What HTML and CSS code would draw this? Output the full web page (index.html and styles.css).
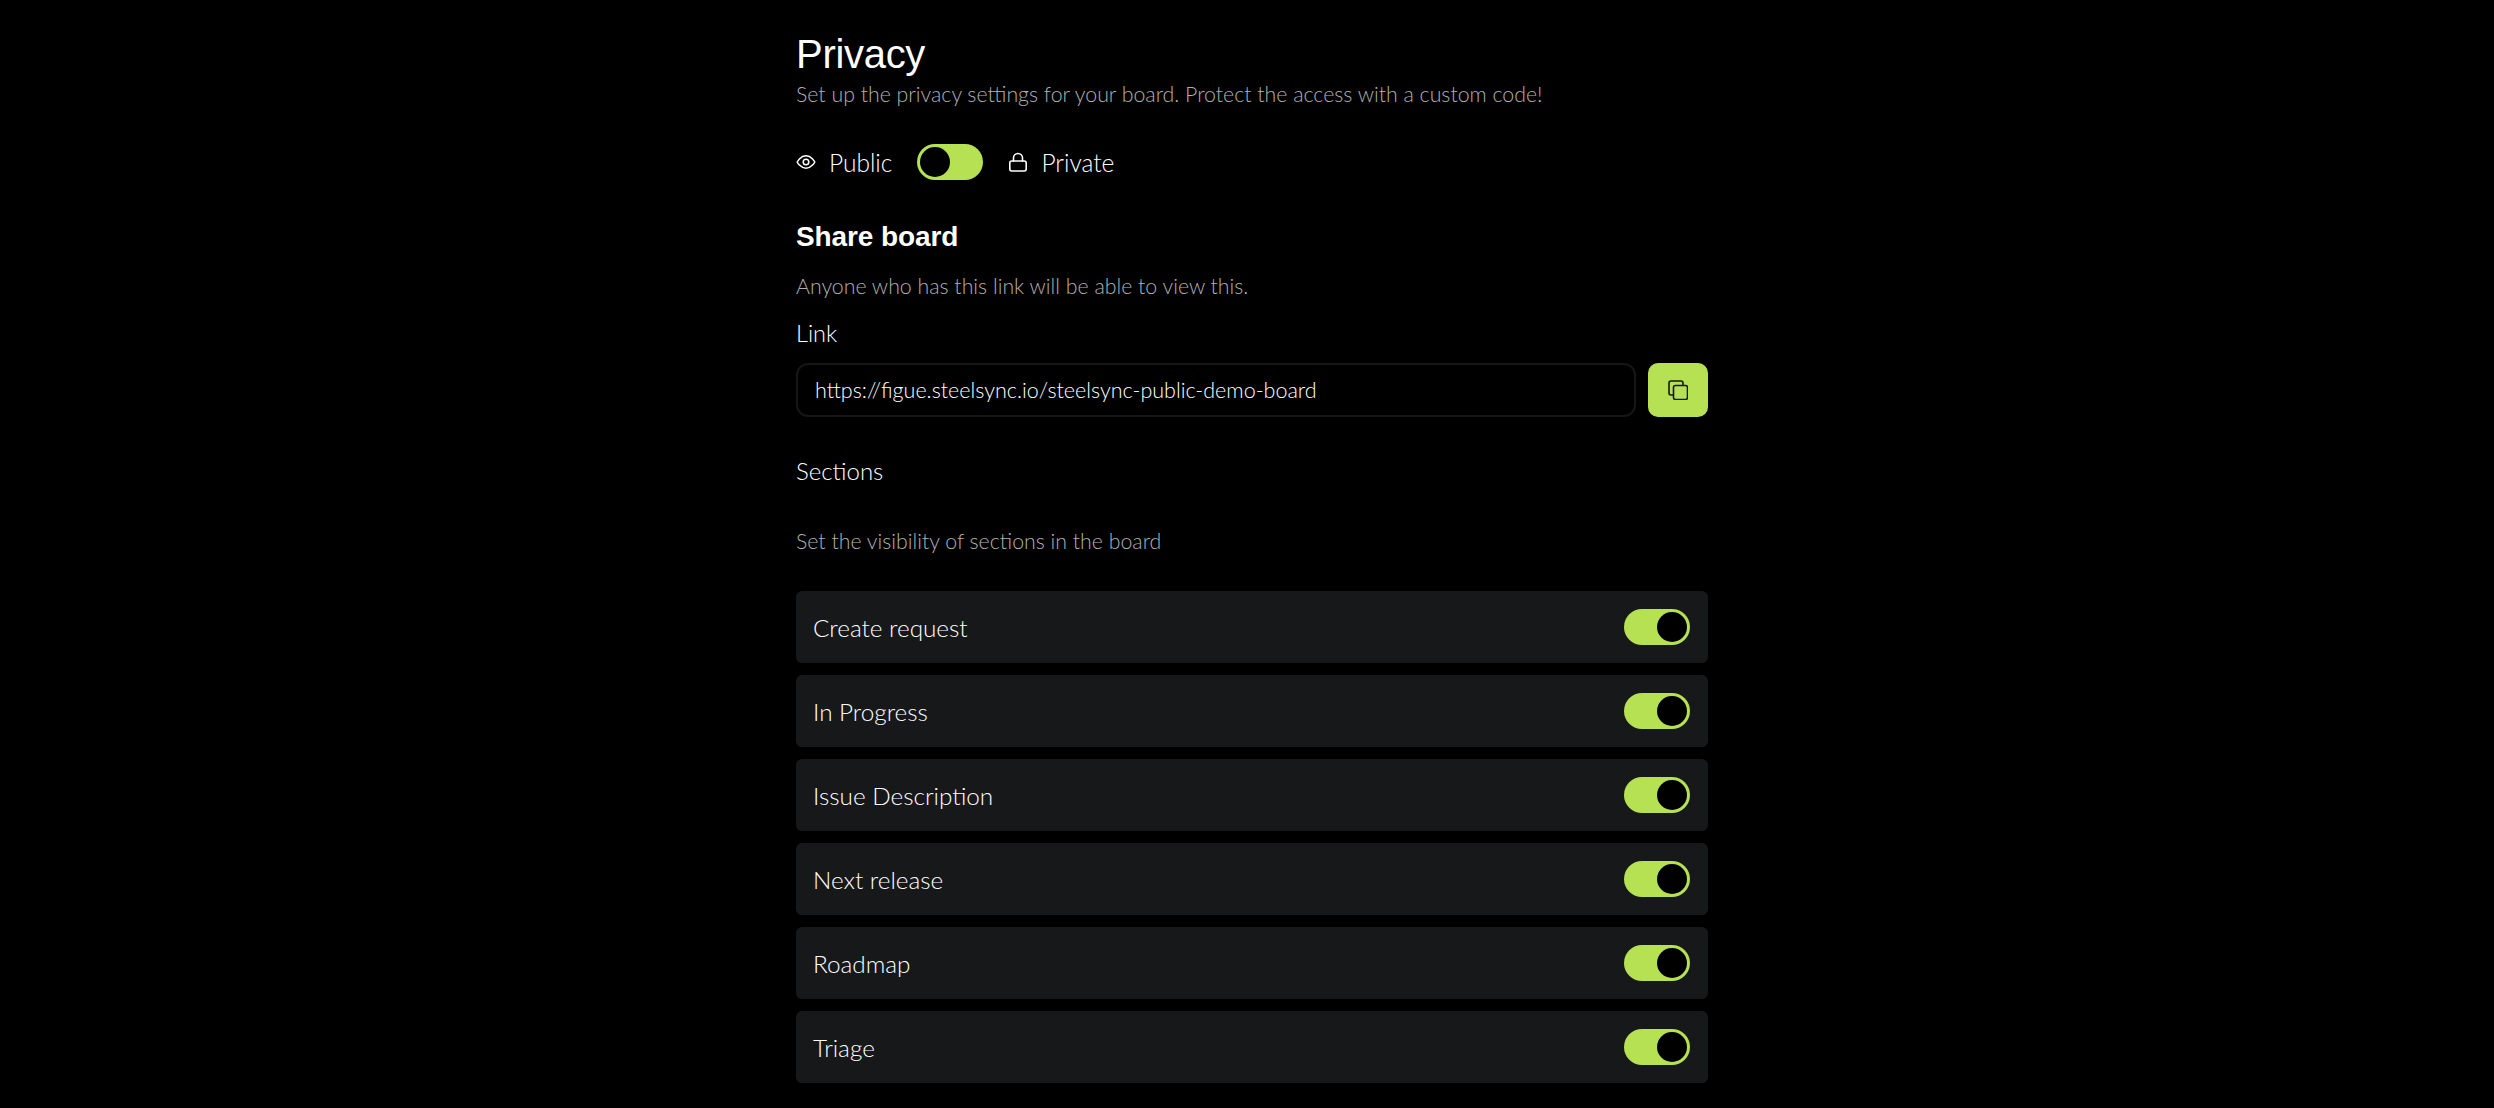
FILE: index.html
```html
<!DOCTYPE html>
<html lang="en">
<head>
<meta charset="utf-8">
<title>Privacy</title>
<link rel="stylesheet" href="styles.css">
</head>
<body>
<main class="panel">
  <h1 class="title">Privacy</h1>
  <p class="muted sub">Set up the privacy settings for your board. Protect the access with a custom code!</p>
  <div class="privacy-row">
    <span class="opt">
      <svg class="ic" viewBox="0 0 20 20" width="20" height="20" fill="none" stroke="#fff" stroke-width="1.5"><path d="M1.2 10S4.2 3.8 10 3.8 18.800 10 18.800 10 15.800 16.200 10 16.200 1.200 10 1.200 10z"/><circle cx="10" cy="10" r="2.800"/></svg>
      Public
    </span>
    <span class="toggle off"><span class="knob"></span></span>
    <span class="opt">
      <svg class="ic" viewBox="0 0 20 20" width="20" height="20" fill="none" stroke="#fff" stroke-width="1.6" stroke-linecap="round"><rect x="1.800" y="9" width="16.400" height="10" rx="2"/><path d="M5.500 9V6a4.500 4.500 0 0 1 9 0v3"/></svg>
      Private
    </span>
  </div>
  <h2 class="share">Share board</h2>
  <p class="muted anyone">Anyone who has this link will be able to view this.</p>
  <label class="link-label">Link</label>
  <div class="link-row">
    <div class="input">https://figue.steelsync.io/steelsync-public-demo-board</div>
    <button class="copy" type="button">
      <svg viewBox="0 0 20 20" width="20" height="20" fill="none" stroke="#16181a" stroke-width="1.6"><rect x="1" y="1" width="14" height="14" rx="2"/><rect x="5.500" y="5.500" width="14" height="14" rx="2" fill="#b5e153"/></svg>
    </button>
  </div>
  <div class="sections">Sections</div>
  <p class="muted vis">Set the visibility of sections in the board</p>
  <div class="list">
    <div class="row"><span>Create request</span><span class="toggle"><span class="knob"></span></span></div>
    <div class="row"><span>In Progress</span><span class="toggle"><span class="knob"></span></span></div>
    <div class="row"><span>Issue Description</span><span class="toggle"><span class="knob"></span></span></div>
    <div class="row"><span>Next release</span><span class="toggle"><span class="knob"></span></span></div>
    <div class="row"><span>Roadmap</span><span class="toggle"><span class="knob"></span></span></div>
    <div class="row"><span>Triage</span><span class="toggle"><span class="knob"></span></span></div>
  </div>
</main>
</body>
</html>
```
FILE: styles.css
```css
* { box-sizing: border-box; }
html, body { margin: 0; height: 100%; overflow: hidden; background: #000; }
body { font-family: Lato, "Liberation Sans", sans-serif; font-weight: 300; color: #fff; }
.panel { width: 912px; margin-left: 796px; padding-top: 30px; }
.title { margin: 0; font-size: 40px; line-height: 48px; font-weight: 400; font-family: "Liberation Sans", sans-serif; letter-spacing: -0.3px; }
.muted { margin: 0; color: #b0b0b0; font-size: 21.3px; line-height: 28px; }
.sub { margin-top: 2px; }
.privacy-row { display: flex; align-items: center; height: 36px; margin-top: 36px; font-size: 24.5px; }
.opt { display: flex; align-items: center; gap: 13px; }
.privacy-row .toggle { margin: 0 25px 0 25px; }
.toggle { display: flex; justify-content: flex-end; align-items: center; width: 66px; height: 36px; padding: 0 3px; border-radius: 18px; background: #b5e153; flex: none; }
.knob { width: 30px; height: 30px; border-radius: 50%; background: #000; }
.toggle.off { justify-content: flex-start; }
.share { margin: 39px 0 0; font-family: "Liberation Sans", sans-serif; font-size: 28px; line-height: 36px; font-weight: 700; letter-spacing: -0.1px; }
.anyone { margin-top: 17px; }
.link-label { display: block; margin-top: 19px; font-size: 23.5px; line-height: 28px; font-weight: 300; }
.link-row { display: flex; gap: 12px; margin-top: 16px; height: 54px; }
.input { flex: 1; display: flex; align-items: center; padding: 0 17px; border: 2px solid #151618; border-radius: 12px; font-size: 21.5px; font-weight: 300; }
.copy { width: 60px; border: 0; padding: 0; border-radius: 10px; background: #b5e153; display: flex; align-items: center; justify-content: center; }
.sections { margin-top: 40px; font-size: 24px; line-height: 28px; }
.vis { margin-top: 42px; }
.list { display: flex; flex-direction: column; gap: 12px; margin-top: 36px; }
.row { display: flex; align-items: center; justify-content: space-between; height: 72px; padding: 0 18px 0 17px; border-radius: 6px; background: #17181a; font-size: 24.3px; }
```
